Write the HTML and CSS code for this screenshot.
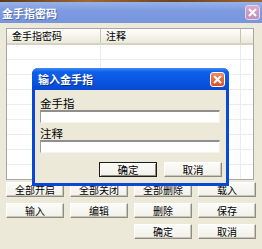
FILE: index.html
```html
<!DOCTYPE html>
<html lang="zh-CN">
<head>
    <meta charset="UTF-8">
    <title>金手指密码</title>
    <link rel="stylesheet" href="styles.css">
</head>
<body>

    <div class="window">
        <div class="strip"></div>
        <div class="titlebar">
            <span class="title">金手指密码</span>
            <span class="close inactive">
                <svg width="9" height="9" viewBox="0 0 9 9"><path d="M1 1 L8 8 M8 1 L1 8" stroke="#fff" stroke-width="2"/></svg>
            </span>
        </div>

        <div class="content">
            <div class="list">
                <div class="list-head">
                    <div class="col c1">金手指密码</div>
                    <div class="col c2">注释</div>
                    <div class="col c3"></div>
                </div>
                <div class="list-rows"></div>
            </div>

            <div class="buttons">
                <button>全部开启</button>
                <button>全部关闭</button>
                <button>全部删除</button>
                <button>载入</button>
                <button>输入</button>
                <button>编辑</button>
                <button>删除</button>
                <button>保存</button>
                <span></span>
                <span></span>
                <button>确定</button>
                <button>取消</button>
            </div>
        </div>

        <!-- modal: 输入金手指 -->
        <div class="dialog">
            <div class="dlg-title">
                <span class="title">输入金手指</span>
                <span class="close active">
                    <svg width="9" height="9" viewBox="0 0 9 9"><path d="M1 1 L8 8 M8 1 L1 8" stroke="#fff" stroke-width="2"/></svg>
                </span>
            </div>
            <div class="dlg-body">
                <div class="label">金手指</div>
                <div class="field"></div>
                <div class="label second">注释</div>
                <div class="field"></div>
                <div class="dlg-buttons">
                    <button class="default">确定</button>
                    <button>取消</button>
                </div>
            </div>
        </div>
    </div>

</body>
</html>
```

FILE: styles.css
```css
body {
    margin: 0;
    background-color: #ece9d8;
    font-family: "Noto Sans CJK SC", "DejaVu Sans", sans-serif;
    color: #000;
}
.window {
    position: relative;
    width: 262px;
    height: 249px;
    overflow: hidden;
    background-color: #ece9d8;
}
.strip {
    height: 2px;
    background: linear-gradient(90deg, #5a3a1c, #a0672e, #6b4420, #9b6430);
}
.titlebar {
    height: 21px;
    display: flex;
    align-items: center;
    justify-content: space-between;
    padding: 0 2px 0 2px;
    background: linear-gradient(#97b1ea, #7d9be0 40%, #7895dc);
}
.title {
    color: #fff;
    font-size: 11px;
    font-weight: bold;
    line-height: 14px;
    text-shadow: 1px 1px 0 rgba(40, 60, 130, 0.5);
}
.close {
    width: 15px;
    height: 15px;
    box-sizing: border-box;
    display: flex;
    align-items: center;
    justify-content: center;
    border: 1px solid #fff;
    border-radius: 3px;
}
.close.inactive {
    background: linear-gradient(#d9a9cf, #c38cba);
    border-color: #e8d6ee;
}
.close.active {
    background: linear-gradient(#ef8a62, #d9502a);
}
.content {
    padding: 5px 8px 0 6px;
}
.list {
    height: 152px;
    box-sizing: border-box;
    border: 1px solid #a7a6aa;
    background-color: #fff;
    display: flex;
    flex-direction: column;
}
.list-head {
    display: flex;
    height: 14px;
    background: linear-gradient(#fff, #ebeadb);
    border-bottom: 2px solid #d6d2c2;
}
.col {
    font-size: 10px;
    line-height: 14px;
    padding-left: 5px;
    border-right: 1px solid #c7c5b2;
    box-sizing: border-box;
}
.c1 { width: 94px; }
.c2 { width: 140px; }
.c3 { flex: 1; border-right: none; }
.list-rows {
    flex: 1;
    background-image:
        linear-gradient(90deg, transparent 93px, #ececec 93px, #ececec 94px, transparent 94px, transparent 233px, #ececec 233px, #ececec 234px, transparent 234px),
        repeating-linear-gradient(transparent 0, transparent 14px, #ececec 14px, #ececec 15px);
}
.buttons {
    margin-top: 2px;
    display: grid;
    grid-template-columns: repeat(4, 58px);
    grid-auto-rows: 15px;
    column-gap: 6px;
    row-gap: 6px;
}
button {
    font-family: "Noto Sans CJK SC", "DejaVu Sans", sans-serif;
    font-size: 10px;
    line-height: 12px;
    padding: 0;
    margin: 0;
    color: #000;
    background: linear-gradient(#fbfbf8, #f1f0ea);
    border: 1px solid #fff;
    border-right-color: #8e8c82;
    border-bottom-color: #8e8c82;
    box-shadow: inset -1px -1px 0 #cac7b9;
    box-sizing: border-box;
}

/* dialog window over the list */
.dialog {
    position: absolute;
    left: 32px;
    top: 68px;
    width: 197px;
    height: 118px;
    box-sizing: border-box;
    padding: 0 3px 3px 3px;
    background: #0b47d6;
    border-radius: 6px 6px 0 0;
    display: flex;
    flex-direction: column;
}
.dlg-title {
    height: 22px;
    margin: 0 -3px;
    padding: 0 4px 0 6px;
    display: flex;
    align-items: center;
    justify-content: space-between;
    border-radius: 6px 6px 0 0;
    background: linear-gradient(#3f8cf7, #0d5fe9 4px, #0a56e2 60%, #0848d2);
}
.dlg-title .title {
    font-size: 11px;
    text-shadow: 1px 1px 0 #0a2f8a;
}
.dlg-body {
    flex: 1;
    background-color: #ece9d8;
    padding: 7px 4px 0 5px;
}
.label {
    font-size: 11.5px;
    line-height: 12px;
    margin-bottom: 1px;
}
.label.second {
    margin-top: 5px;
    line-height: 11px;
}
.field {
    width: 180px;
    height: 13px;
    box-sizing: border-box;
    background: #fff;
    border-top: 2px solid #8f8f8f;
    border-left: 1px solid #9a9a9a;
    border-right: 1px solid #f4f3ee;
    border-bottom: 1px solid #f4f3ee;
}
.dlg-buttons {
    margin-top: 9px;
    display: flex;
    justify-content: flex-end;
    gap: 7px;
}
.dlg-buttons button {
    width: 58px;
    height: 15px;
    font-size: 10.5px;
}
.dlg-buttons button.default {
    border: 1px solid #1c1c1c;
    box-shadow: inset 1px 1px 0 #fff, inset -1px -1px 0 #8e8c82;
}
```
